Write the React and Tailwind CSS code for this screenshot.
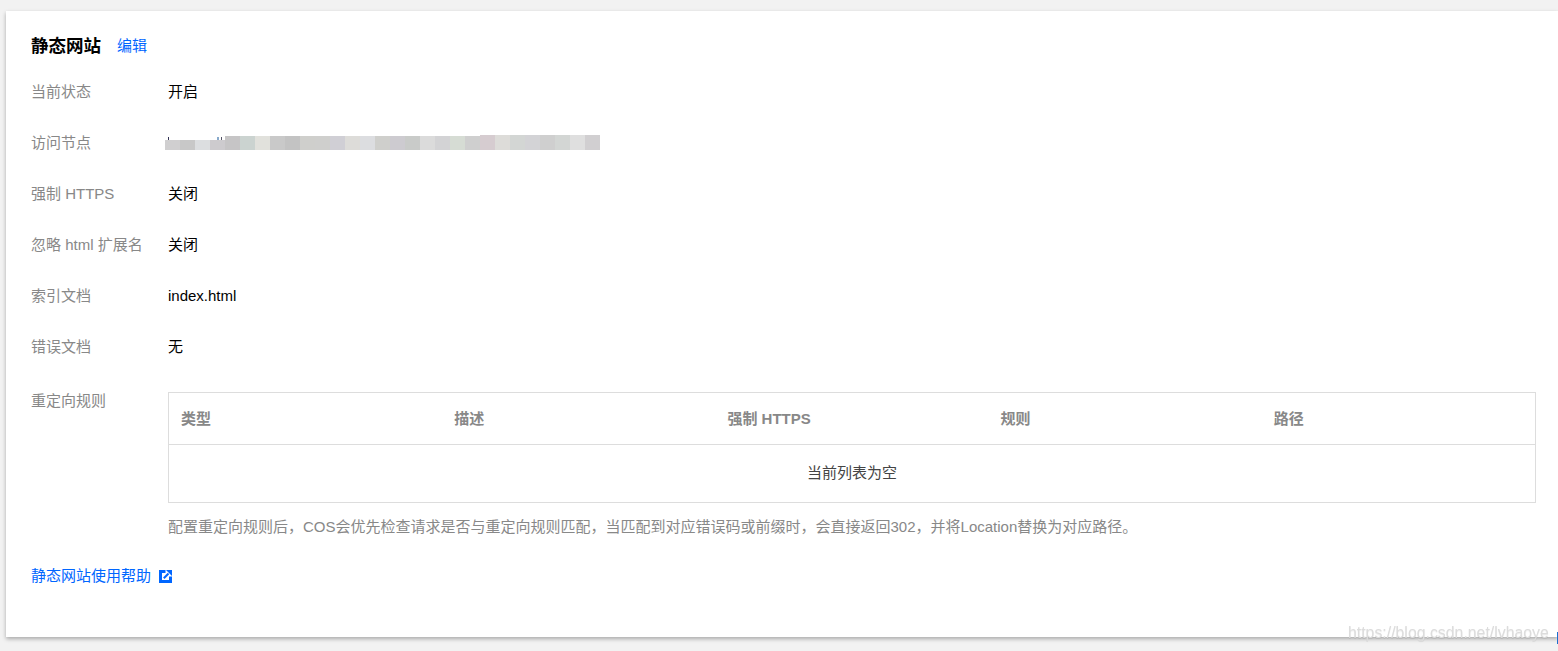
import React from 'react';

const pixelCells = [
  'bg-[#d0cfd0] h-[10px]', 'bg-[#c8c8c8] h-[10px]', 'bg-[#dcdee0] h-[10px]', 'bg-[#cdcbce] h-[10px]',
  'bg-[#c6c5c6] h-[14px]', 'bg-[#cbd3d0] h-[14px]', 'bg-[#e1e1dc] h-[14px]', 'bg-[#c9c9c9] h-[14px]',
  'bg-[#c3c3c3] h-[14px]', 'bg-[#cfcfcc] h-[14px]', 'bg-[#cfcfcd] h-[14px]', 'bg-[#d0cfd5] h-[14px]',
  'bg-[#dddcd9] h-[14px]', 'bg-[#dcdde0] h-[14px]', 'bg-[#cfcfcc] h-[14px]', 'bg-[#cdcbd0] h-[14px]',
  'bg-[#c9cbc9] h-[14px]', 'bg-[#dbdbdb] h-[14px]', 'bg-[#d3d3d5] h-[14px]', 'bg-[#d6dcd4] h-[14px]',
  'bg-[#cfcfcf] h-[14px]', 'bg-[#d6ccd0] h-[15px]', 'bg-[#dddcd9] h-[15px]', 'bg-[#d3d6d4] h-[15px]',
  'bg-[#d3d3d6] h-[15px]', 'bg-[#cfcfcf] h-[15px]', 'bg-[#d3d6d4] h-[15px]', 'bg-[#dfdfdf] h-[15px]',
  'bg-[#d1cfd1] h-[15px]',
];

const columns = ['类型', '描述', '强制 HTTPS', '规则', '路径'];

function Row({ label, children }) {
  return (
    <div className="flex h-[51px] items-center">
      <div className="w-[137px] shrink-0 text-[#888888]">{label}</div>
      <div className="text-black">{children}</div>
    </div>
  );
}

export default function App() {
  return (
    <div className="relative h-[651px] overflow-hidden bg-[#f2f2f2] pl-[6px] pt-[11px] font-['Liberation_Sans','Noto_Sans_CJK_SC',sans-serif] text-[15px] leading-[20px]">
      <div className="h-[626px] bg-white pl-[25px] pr-[22px] pt-[24px] shadow-[0_2px_4px_rgba(0,0,0,0.3)]">
        {/* title */}
        <div className="flex h-[22px] items-center">
          <h2 className="text-[17.5px] font-bold text-black">静态网站</h2>
          <a className="ml-[16px] text-[#0066ff]">编辑</a>
        </div>

        <div className="mt-[9px]">
          <Row label="当前状态">开启</Row>
          <Row label="访问节点">
            {/* blurred address */}
            <div className="relative -ml-[3px] flex h-[15px] items-end">
              {pixelCells.map((c, i) => (
                <div key={i} className={`w-[15px] ${c}`} />
              ))}
              <span className="absolute left-[3px] top-[2px] h-[3px] w-px bg-[#333355]" />
              <span className="absolute left-[52px] top-[2px] h-[3px] w-[2px] bg-[#88aacc]" />
              <span className="absolute left-[56px] top-[2px] h-[3px] w-px bg-[#555566]" />
            </div>
          </Row>
          <Row label="强制 HTTPS">关闭</Row>
          <Row label="忽略 html 扩展名">关闭</Row>
          <Row label="索引文档">index.html</Row>
          <Row label="错误文档">无</Row>
        </div>

        {/* redirect rules */}
        <div className="mt-[20px] flex">
          <div className="-mt-px w-[137px] shrink-0 text-[#888888]">重定向规则</div>
          <div className="flex-1">
            <div className="border border-[#dddddd]">
              <div className="grid h-[52px] grid-cols-5 items-center border-b border-[#dddddd] font-bold text-[#888888]">
                {columns.map((c) => (
                  <div key={c} className="pl-[12px]">{c}</div>
                ))}
              </div>
              <div className="flex h-[57px] items-center justify-center pb-[2px] text-[#444444]">当前列表为空</div>
            </div>
            <p className="mt-[14px] text-[#888888]">
              配置重定向规则后，COS会优先检查请求是否与重定向规则匹配，当匹配到对应错误码或前缀时，会直接返回302，并将Location替换为对应路径。
            </p>
          </div>
        </div>

        {/* help link */}
        <div className="mt-[29px] flex items-center text-[#0066ff]">
          <a>静态网站使用帮助</a>
          <svg className="ml-[8px]" width="13" height="13" viewBox="0 0 13 13">
            <path d="M6.5 1.5h-5v10h10v-5" fill="none" stroke="#0066ff" strokeWidth="3" />
            <path d="M4.8 8.2 9.5 3.5" fill="none" stroke="#0066ff" strokeWidth="2" />
            <path d="M7 0h6v6z" fill="#0066ff" />
          </svg>
        </div>
      </div>

      {/* screenshot watermark */}
      <div className="absolute left-[1348px] top-[623px] whitespace-nowrap text-[15.85px] text-[#dcdcdc] blur-[0.4px] [text-shadow:0_1px_1px_rgba(0,0,0,0.08)]">
        https://blog.csdn.net/lvhaoye
      </div>
      <div className="absolute right-0 top-[632px] h-[12px] w-px bg-[#1a6fd0]" />
    </div>
  );
}
